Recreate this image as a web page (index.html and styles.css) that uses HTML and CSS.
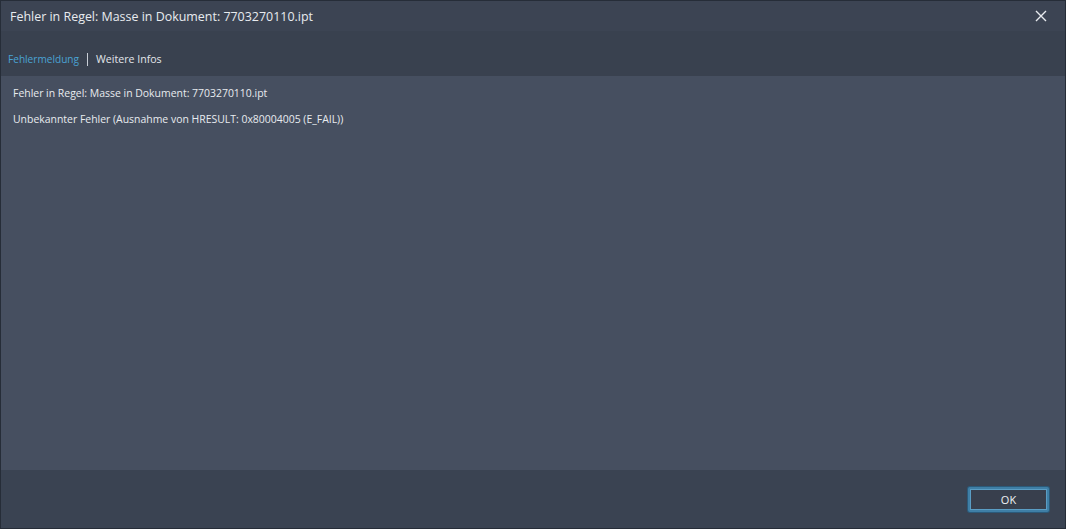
FILE: index.html
```html
<!DOCTYPE html>
<html lang="de">
<head>
<meta charset="utf-8">
<title>Fehler</title>
<link rel="stylesheet" href="styles.css">
</head>
<body>
<div class="dialog">
  <div class="titlebar">
    <span class="title">Fehler in Regel: Masse in Dokument: 7703270110.ipt</span>
    <svg class="close" width="12" height="12" viewBox="0 0 12 12"><path d="M1 1L11 11M11 1L1 11" stroke="#e8ebef" stroke-width="1.4"/></svg>
  </div>
  <div class="tabs">
    <span class="tab active">Fehlermeldung</span>
    <span class="sep"></span>
    <span class="tab">Weitere Infos</span>
  </div>
  <div class="content">
    <p class="line">Fehler in Regel: Masse in Dokument: 7703270110.ipt</p>
    <p class="line">Unbekannter Fehler (Ausnahme von HRESULT: 0x80004005 (E_FAIL))</p>
  </div>
  <div class="footer">
    <button class="ok">OK</button>
  </div>
</div>
</body>
</html>
```
FILE: styles.css
```css
html, body { margin: 0; padding: 0; }
body { width: 1066px; height: 529px; overflow: hidden; background: #262d38; font-family: "Open Sans", "Noto Sans", sans-serif; }
.dialog { box-sizing: border-box; width: 1066px; height: 529px; border: 1px solid #262d38; display: flex; flex-direction: column; background: #464f60; }
.titlebar { height: 30px; flex: none; background: #3c4453; display: flex; align-items: center; justify-content: space-between; padding: 0 18px 0 9px; color: #e8ebef; font-size: 12.45px; }
.close { display: block; }
.tabs { height: 45px; flex: none; background: #39414f; display: flex; align-items: center; padding: 11px 0 0 7px; box-sizing: border-box; font-size: 10.6px; color: #e3e6ea; }
.tab.active { color: #4aa3d3; font-size: 10.1px; }
.sep { width: 1px; height: 13px; background: #c9ced6; margin: 0 8px 0 8px; }
.content { flex: 1; padding: 9px 12px; color: #e8ebef; font-size: 10.45px; }
.line { margin: 0 0 10px; line-height: 16px; }
.footer { height: 58px; flex: none; background: #3a4352; display: flex; align-items: center; justify-content: flex-end; padding: 0 16px 0 0; box-sizing: border-box; padding-top: 1px; }
.ok { width: 81px; height: 25px; box-sizing: border-box; background: #383f4d; border: 2px solid #3f7fa6; box-shadow: 0 0 0 1px #2b5a7a, inset 0 0 0 1px #5a9dc4; border-radius: 2px; color: #eef1f4; font-family: "Open Sans", "Noto Sans", sans-serif; font-size: 11px; padding: 0; }
```
